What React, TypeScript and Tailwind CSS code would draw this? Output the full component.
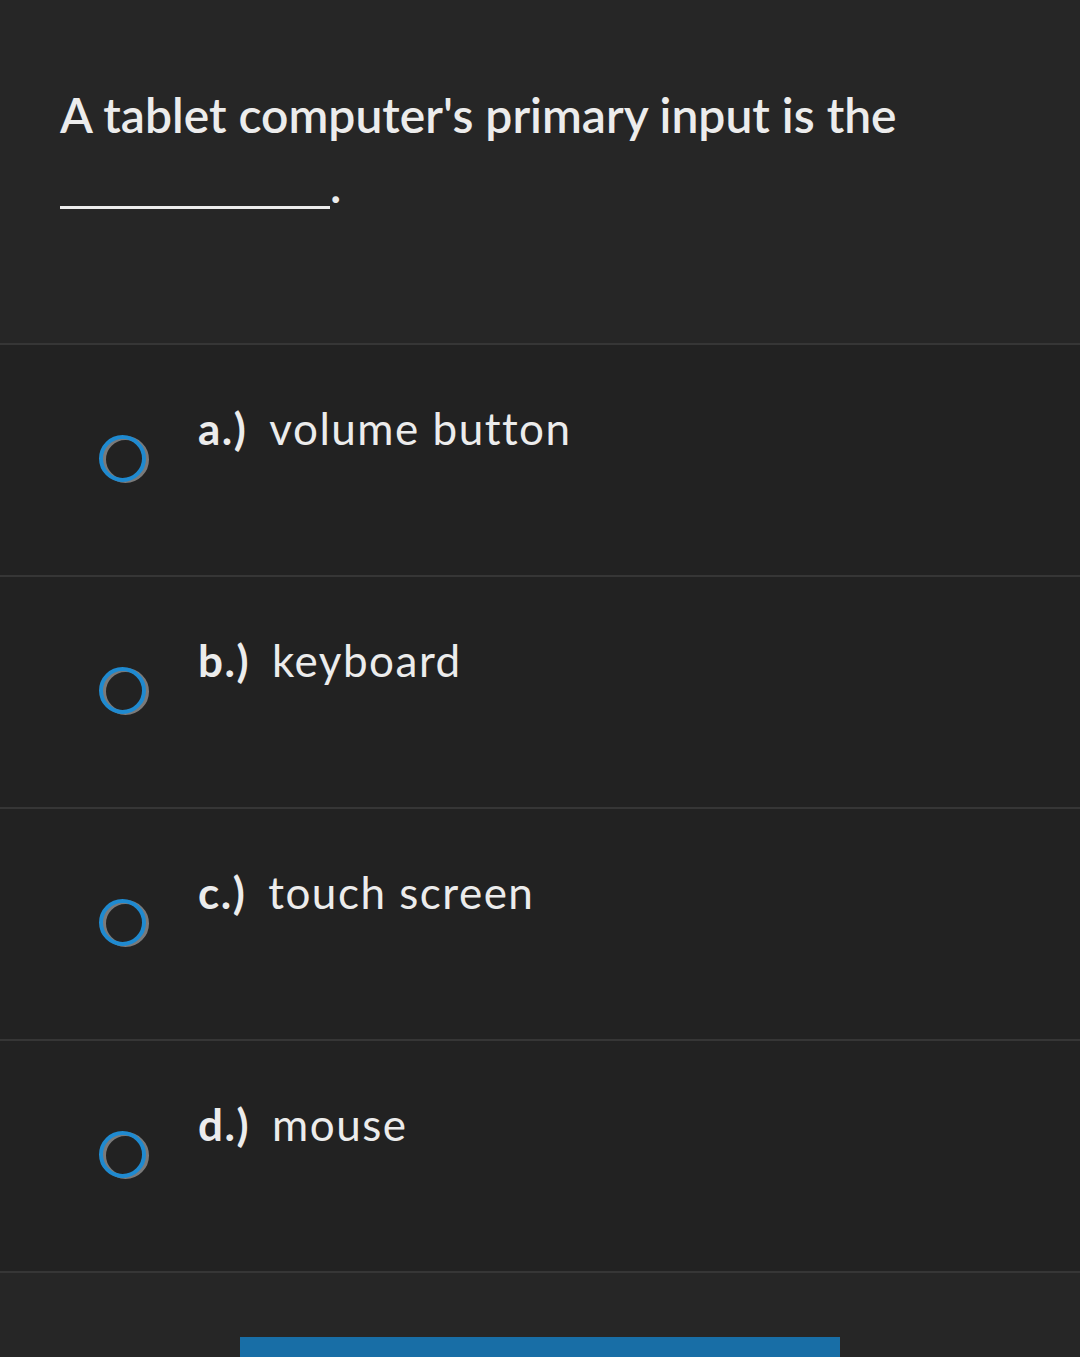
const options = [
  { label: 'a.)', text: 'volume button' },
  { label: 'b.)', text: 'keyboard' },
  { label: 'c.)', text: 'touch screen' },
  { label: 'd.)', text: 'mouse' },
]

function Radio() {
  return (
    <div className="relative h-[50px] w-[52px] shrink-0">
      <div className="absolute left-[3px] top-[1px] h-[47px] w-[47px] rounded-full border-[4px] border-[#7a7a7a]" />
      <div className="absolute left-0 top-0 h-[47px] w-[47px] rounded-full border-[4px] border-[#1f8ad0]" />
    </div>
  )
}

export default function App() {
  return (
    <div className="min-h-[1357px] w-[1080px] bg-[#262626] font-['Lato','Open_Sans',sans-serif] text-[#ececec]">
      <div className="h-[343px] px-[60px] pt-[80px]">
        <h1 className="text-[48px] font-semibold leading-[70px]">
          A tablet computer's primary input is the
          <br />
          <span className="inline-block w-[270px] border-b-[3px] border-[#ececec] align-[-6px]" />.
        </h1>
      </div>
      {options.map(o => (
        <div key={o.label} className="flex h-[232px] border-t-2 border-[#363636] bg-[#222222] pl-[99px] pt-[90px]">
          <Radio />
          <div className="-mt-[33px] ml-[47px] flex gap-[22px] text-[44px] leading-[1.2]">
            <span className="font-bold tracking-[1.5px]">{o.label}</span>
            <span className="tracking-[1.5px]">{o.text}</span>
          </div>
        </div>
      ))}
      <div className="border-t-2 border-[#363636] px-[240px] pt-[64px]">
        <div className="h-[20px] bg-[#186ea6]" />
      </div>
    </div>
  )
}
